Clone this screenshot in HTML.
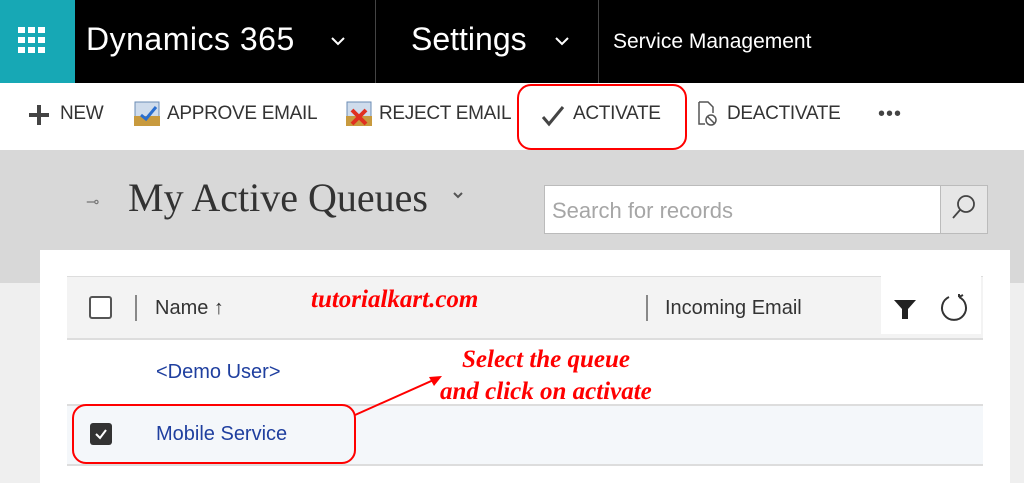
<!DOCTYPE html>
<html><head><style>
*{margin:0;padding:0;box-sizing:border-box}
body{width:1024px;height:483px;overflow:hidden;background:#efefef;font-family:"Liberation Sans",sans-serif;position:relative}
.a{position:absolute}
.tb{color:#333;font-size:19px;top:103px;letter-spacing:-0.3px}
.red{color:#f00;font-family:"Liberation Serif",serif;font-style:italic;font-weight:bold}
</style></head><body>
<div class="a" style="left:0;top:0;width:1024px;height:83px;background:#000"></div>
<div class="a" style="left:0;top:0;width:75px;height:83px;background:#17a8b5"></div>
<svg class="a" style="left:18px;top:27px" width="28" height="28"><g fill="#fff">
<rect x="0" y="0" width="7" height="6"/><rect x="10" y="0" width="7" height="6"/><rect x="20" y="0" width="7" height="6"/>
<rect x="0" y="10" width="7" height="6"/><rect x="10" y="10" width="7" height="6"/><rect x="20" y="10" width="7" height="6"/>
<rect x="0" y="20" width="7" height="6"/><rect x="10" y="20" width="7" height="6"/><rect x="20" y="20" width="7" height="6"/></g></svg>
<div class="a" style="left:86px;top:21px;color:#fff;font-size:32px;letter-spacing:0.5px">Dynamics 365</div>
<svg class="a" style="left:330px;top:36px" width="16" height="10"><path d="M2 2l6 6 6-6" stroke="#fff" stroke-width="2" fill="none"/></svg>
<div class="a" style="left:375px;top:0;width:1px;height:83px;background:#444"></div>
<div class="a" style="left:411px;top:21px;color:#fff;font-size:32px">Settings</div>
<svg class="a" style="left:554px;top:36px" width="16" height="10"><path d="M2 2l6 6 6-6" stroke="#fff" stroke-width="2" fill="none"/></svg>
<div class="a" style="left:598px;top:0;width:1px;height:83px;background:#444"></div>
<div class="a" style="left:613px;top:30px;color:#fff;font-size:21px">Service Management</div>
<div class="a" style="left:0;top:83px;width:1024px;height:67px;background:#fff"></div>
<svg class="a" style="left:28px;top:104px" width="22" height="22"><path d="M11 1v20M1 11h20" stroke="#444" stroke-width="4"/></svg>
<div class="a tb" style="left:60px">NEW</div>
<svg class="a" style="left:133px;top:100px" width="28" height="28"><rect x="2" y="2" width="24" height="16" fill="#cfdcec" stroke="#6b8cb5"/><rect x="1" y="16" width="26" height="10" fill="#c89a3e"/><path d="M8 15l5 4 10-12" stroke="#2a6fd0" stroke-width="3" fill="none"/></svg>
<div class="a tb" style="left:167px">APPROVE EMAIL</div>
<svg class="a" style="left:345px;top:100px" width="28" height="28"><rect x="2" y="2" width="24" height="16" fill="#cfdcec" stroke="#6b8cb5"/><rect x="1" y="16" width="26" height="10" fill="#c89a3e"/><path d="M7 10l14 14M21 10L7 24" stroke="#e03020" stroke-width="4"/></svg>
<div class="a tb" style="left:379px">REJECT EMAIL</div>
<div class="a" style="left:517px;top:84px;width:170px;height:66px;border:2px solid #f00;border-radius:14px"></div>
<svg class="a" style="left:541px;top:105px" width="24" height="22"><path d="M2 12l6 7L22 2" stroke="#444" stroke-width="3" fill="none"/></svg>
<div class="a tb" style="left:573px">ACTIVATE</div>
<svg class="a" style="left:697px;top:100px" width="22" height="28"><path d="M2 2h9l5 5v6M2 2v22h6" stroke="#555" stroke-width="1.5" fill="none"/><circle cx="14" cy="20" r="5" stroke="#555" stroke-width="1.5" fill="none"/><path d="M10 16l8 8" stroke="#555" stroke-width="1.5"/></svg>
<div class="a tb" style="left:727px">DEACTIVATE</div>
<div class="a" style="left:878px;top:103px;font-size:20px;color:#444;letter-spacing:1px">•••</div>
<div class="a" style="left:0;top:150px;width:1024px;height:133px;background:#d8d8d8"></div>
<div class="a" style="left:86px;top:192px;color:#777;font-size:16px">⊸</div>
<div class="a" style="left:128px;top:174px;color:#333;font-size:40px;font-family:'Liberation Serif',serif">My Active Queues</div>
<svg class="a" style="left:452px;top:191px" width="12" height="8"><path d="M2 2l4 4 4-4" stroke="#555" stroke-width="2" fill="none"/></svg>
<div class="a" style="left:544px;top:185px;width:444px;height:49px;background:#fff;border:1px solid #bbb"></div>
<div class="a" style="left:940px;top:186px;width:47px;height:47px;background:#e6e6e6;border-left:1px solid #bbb"></div>
<svg class="a" style="left:950px;top:192px" width="28" height="30"><circle cx="16" cy="12" r="8" stroke="#444" stroke-width="1.8" fill="none"/><path d="M10 18L3 26" stroke="#444" stroke-width="1.8"/></svg>
<div class="a" style="left:552px;top:198px;color:#a6a6a6;font-size:22px">Search for records</div>
<div class="a" style="left:40px;top:250px;width:970px;height:233px;background:#fff"></div>
<div class="a" style="left:67px;top:276px;width:916px;height:64px;background:#f3f3f3;border-top:1px solid #ddd;border-bottom:2px solid #ddd"></div>
<div class="a" style="left:881px;top:276px;width:100px;height:58px;background:#fff"></div>
<div class="a" style="left:89px;top:296px;width:23px;height:23px;border:2px solid #555;border-radius:3px;background:#fff"></div>
<div class="a" style="left:135px;top:295px;width:2px;height:26px;background:#888"></div>
<div class="a" style="left:155px;top:297px;color:#333;font-size:20px">Name ↑</div>
<div class="a red" style="left:311px;top:286px;font-size:25px">tutorialkart.com</div>
<div class="a" style="left:646px;top:295px;width:2px;height:26px;background:#888"></div>
<div class="a" style="left:665px;top:297px;color:#333;font-size:20px">Incoming Email</div>
<svg class="a" style="left:893px;top:298px" width="24" height="24"><path d="M1 2h22l-8 9v10h-6V11z" fill="#222"/></svg>
<svg class="a" style="left:939px;top:293px" width="30" height="30"><path d="M10 4A12 12 0 1 0 20 4" stroke="#333" stroke-width="2" fill="none"/><path d="M20 4l0 -3M20 4l4 -2" stroke="#333" stroke-width="2"/></svg>
<div class="a" style="left:67px;top:404px;width:916px;height:62px;background:#f4f7fa;border-top:2px solid #ddd;border-bottom:2px solid #ddd"></div>
<div class="a" style="left:156px;top:361px;color:#1f3f9f;font-size:20px">&lt;Demo User&gt;</div>
<div class="a" style="left:90px;top:423px;width:22px;height:22px;background:#333;border-radius:3px"></div>
<svg class="a" style="left:90px;top:423px" width="22" height="22"><path d="M6 11l4 4 6-8" stroke="#fff" stroke-width="2" fill="none"/></svg>
<div class="a" style="left:156px;top:423px;color:#1f3f9f;font-size:20px">Mobile Service</div>
<div class="a" style="left:72px;top:404px;width:284px;height:60px;border:2px solid #f00;border-radius:14px"></div>
<svg class="a" style="left:350px;top:370px" width="100" height="50"><path d="M5 45L88 8" stroke="#f00" stroke-width="2"/><path d="M92 6l-13 1 5 9z" fill="#f00"/></svg>
<div class="a red" style="left:462px;top:346px;font-size:25px">Select the queue</div>
<div class="a red" style="left:440px;top:378px;font-size:25px">and click on activate</div>
</body></html>
